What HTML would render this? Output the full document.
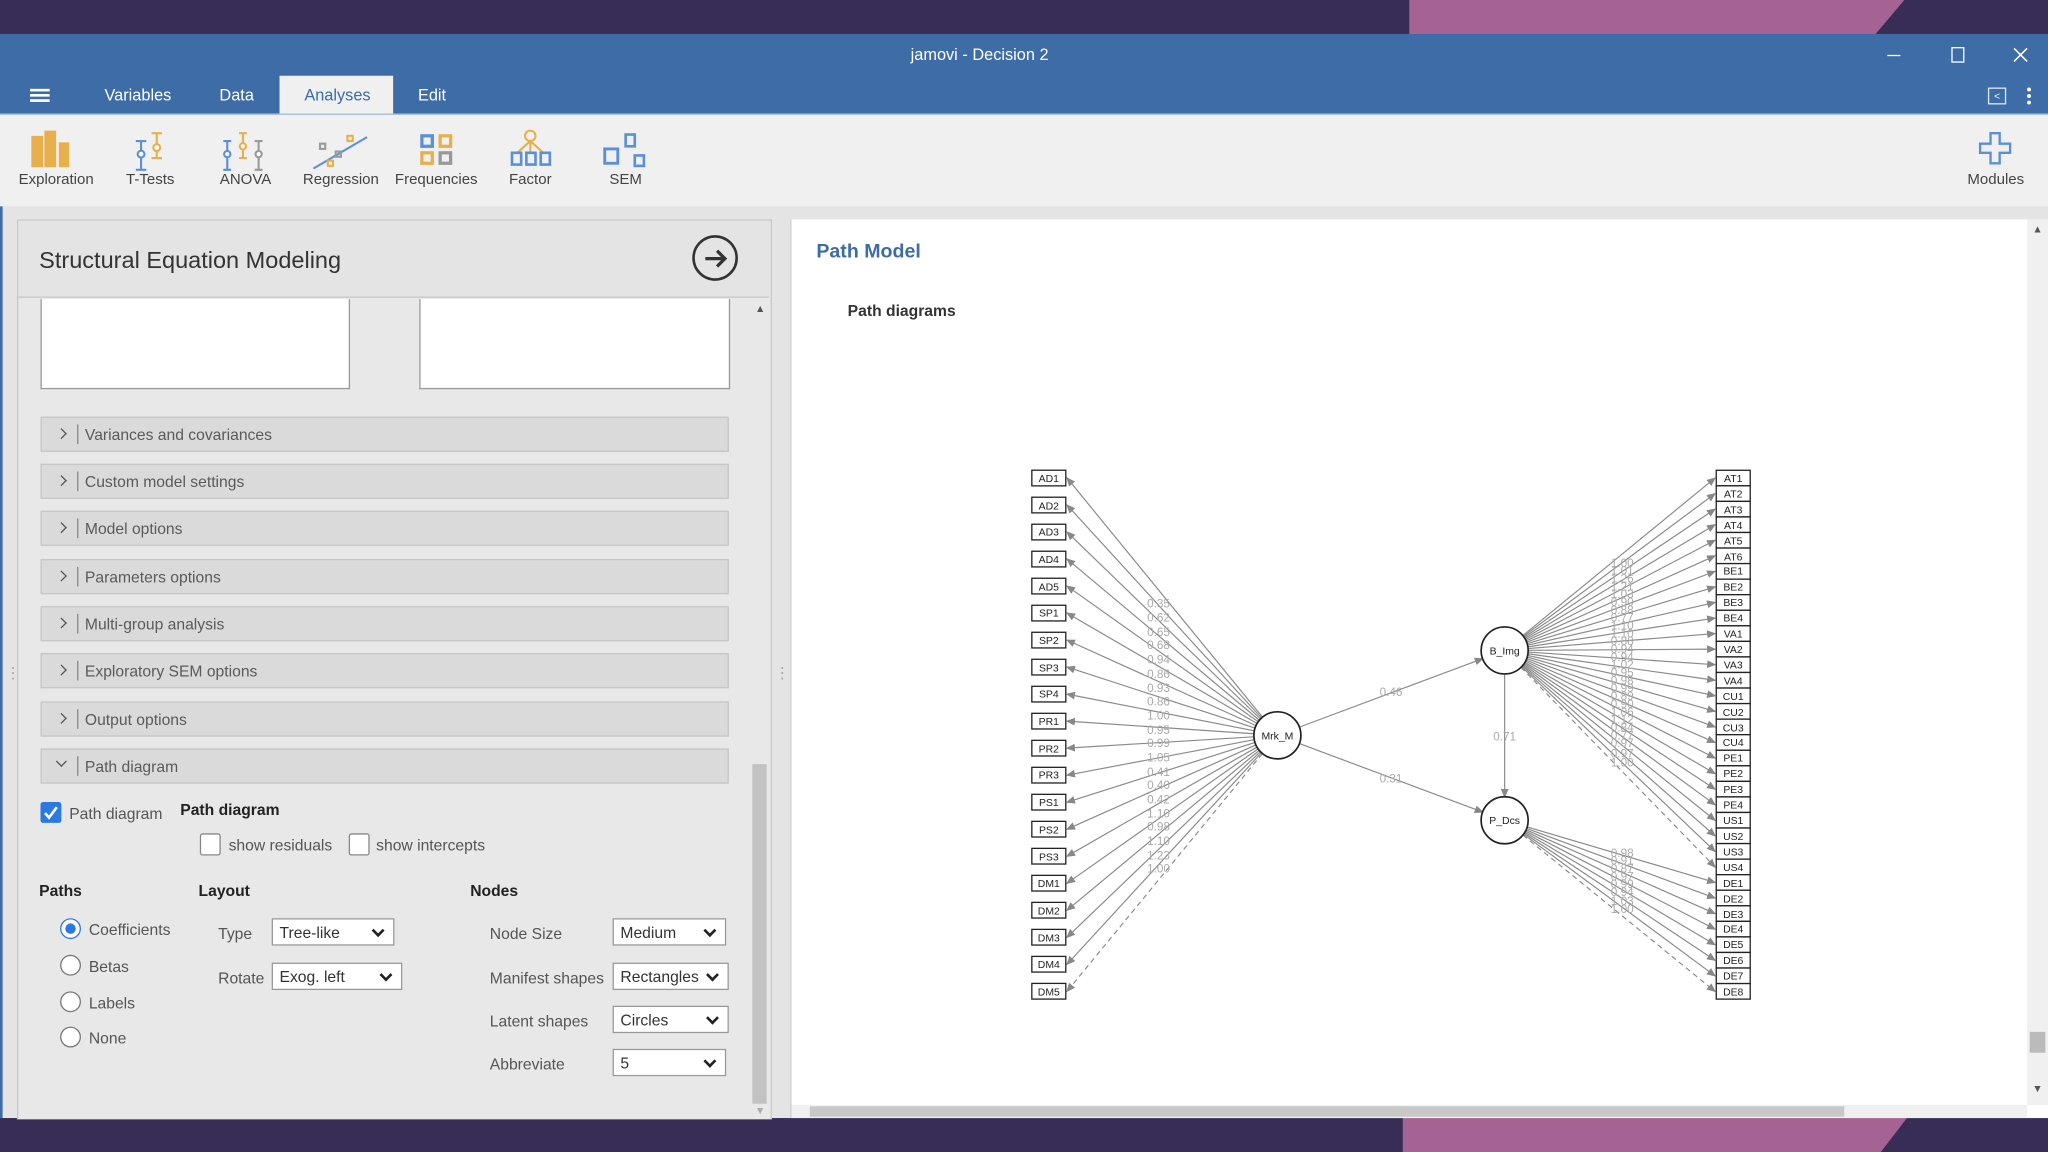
<!DOCTYPE html>
<html><head><meta charset="utf-8">
<style>
html,body{margin:0;padding:0;width:2048px;height:1152px;overflow:hidden;background:#372d57;}
#w{position:absolute;left:0;top:0;width:1568px;height:882px;transform:scale(1.306122);transform-origin:0 0;font-family:"Liberation Sans",sans-serif;}
.a{position:absolute;}
.t{position:absolute;white-space:nowrap;}
.row{position:absolute;left:31px;width:525px;height:25px;background:#dadada;border:1px solid #c6c6c6;}
.row span{position:absolute;left:33px;top:6px;font-size:12px;color:#5a5a5a;}
.row i{position:absolute;left:27px;top:5px;width:1px;height:15px;background:#888;}
.row b{position:absolute;left:12px;top:9px;width:5px;height:5px;border-right:1.6px solid #555;border-bottom:1.6px solid #555;transform:rotate(-45deg);}
.sel{position:absolute;height:21px;background:#fff;border:1px solid #999;font-size:12px;color:#333;box-sizing:border-box;padding:3px 0 0 5px;}
.sel:after{content:"";position:absolute;right:8px;top:5px;width:5px;height:5px;border-right:2px solid #222;border-bottom:2px solid #222;transform:rotate(45deg);}
.lab{font-size:12px;color:#555;}
.rad{position:absolute;width:14px;height:14px;border:1px solid #777;border-radius:50%;background:#fff;}
.ic{position:absolute;top:130px;font-size:11.5px;color:#444;text-align:center;width:70px;}
</style></head><body><div id="w">
<svg class="a" style="left:0;top:0" width="1568" height="882">
<rect x="0" y="0" width="1568" height="26" fill="#372d57"/>
<polygon points="1079,0 1458,0 1436,26 1079,26" fill="#a46393"/>
<rect x="0" y="856" width="1568" height="26" fill="#372d57"/>
<polygon points="1074,856 1460,856 1440,882 1074,882" fill="#a46393"/>
</svg>
<div class="a" style="left:0;top:26px;width:1568px;height:61px;background:#3d6ca7"></div>
<div class="t" style="left:0;width:1500px;text-align:center;top:35px;font-size:12.5px;color:#fff">jamovi - Decision 2</div>
<div class="a" style="left:1445px;top:42px;width:10px;height:1px;background:#fff"></div>
<div class="a" style="left:1494px;top:36px;width:8px;height:10px;border:1px solid #fff"></div>
<svg class="a" style="left:1541px;top:36px" width="12" height="12"><path d="M1 1L11 11M11 1L1 11" stroke="#fff" stroke-width="1.2"/></svg>
<div class="a" style="left:1522px;top:67px;width:12px;height:11px;border:1px solid #dfe8f3;font-size:8px;color:#fff;line-height:11px;text-align:center">&lt;</div>
<div class="a" style="left:1552px;top:67px;width:3px;height:3px;border-radius:50%;background:#fff;box-shadow:0 5px 0 #fff,0 10px 0 #fff"></div>
<div class="a" style="left:23px;top:68px;width:15px;height:2px;background:#fff;box-shadow:0 4px 0 #fff,0 8px 0 #fff"></div>
<div class="t" style="left:80px;top:66px;font-size:12.5px;color:#fff">Variables</div>
<div class="t" style="left:168px;top:66px;font-size:12.5px;color:#fff">Data</div>
<div class="a" style="left:214px;top:58px;width:87px;height:29px;background:#f0f0f0"></div>
<div class="t" style="left:233px;top:66px;font-size:12.5px;color:#3d6ca7">Analyses</div>
<div class="t" style="left:320px;top:66px;font-size:12.5px;color:#fff">Edit</div>
<div class="a" style="left:0;top:87px;width:1568px;height:71px;background:#f0f0f0;border-top:1px solid #a8c0e0"></div>
<div class="a" style="left:0;top:158px;width:1568px;height:698px;background:#e4e4e4"></div>
<svg class="a" style="left:0;top:87px" width="1568" height="60">
<g fill="#e8b04c"><rect x="24" y="17" width="9" height="24"/><rect x="34" y="13" width="9" height="28"/><rect x="45" y="22" width="8" height="19"/></g>
<g stroke-width="1.6" fill="none">
<path d="M108 21v22M104 21h8M104 43h8" stroke="#5b8fd8"/><circle cx="108" cy="31" r="2.6" stroke="#5b8fd8" fill="#fff"/>
<path d="M120 15v19M116 15h8M116 34h8" stroke="#e8b04c"/><circle cx="120" cy="26" r="2.6" stroke="#e8b04c" fill="#fff"/>
<path d="M174 21v22M171 21h6M171 43h6" stroke="#5b8fd8"/><circle cx="174" cy="31" r="2.4" stroke="#5b8fd8" fill="#fff"/>
<path d="M186 15v19M183 15h6M183 34h6" stroke="#e8b04c"/><circle cx="186" cy="25" r="2.4" stroke="#e8b04c" fill="#fff"/>
<path d="M198 21v22M195 21h6M195 43h6" stroke="#999"/><circle cx="198" cy="31" r="2.4" stroke="#999" fill="#fff"/>
<path d="M240 42L281 18" stroke="#5b8fd8"/><rect x="245" y="23" width="4" height="4" stroke="#999"/><rect x="257" y="29" width="4" height="4" stroke="#999"/><rect x="266" y="17" width="4" height="4" stroke="#e8b04c"/><rect x="251" y="36" width="4" height="4" stroke="#e8b04c"/>
<rect x="323" y="17" width="8" height="8" stroke="#5b8fd8" stroke-width="2.5"/><rect x="337" y="17" width="8" height="8" stroke="#e8b04c" stroke-width="2.5"/><rect x="323" y="30" width="8" height="8" stroke="#e8b04c" stroke-width="2.5"/><rect x="337" y="30" width="8" height="8" stroke="#999" stroke-width="2.5"/>
<circle cx="406" cy="17" r="4" stroke="#e8b04c"/><path d="M406 21v9M406 21l-10 9M406 21l10 9" stroke="#e8b04c"/><rect x="392" y="30" width="7" height="9" stroke="#5b8fd8" stroke-width="2"/><rect x="403" y="30" width="7" height="9" stroke="#5b8fd8" stroke-width="2"/><rect x="414" y="30" width="7" height="9" stroke="#5b8fd8" stroke-width="2"/>
<rect x="463" y="27" width="10" height="11" stroke="#5b8fd8" stroke-width="2.2"/><rect x="479" y="16" width="7" height="9" stroke="#5b8fd8" stroke-width="2"/><rect x="486" y="32" width="7" height="8" stroke="#5b8fd8" stroke-width="2"/>
<path d="M1524 15h7v8h8v7h-8v8h-7v-8h-8v-7h8z" stroke="#5b8fd8" stroke-width="1.8"/>
</g></svg>
<div class="ic" style="left:8px;top:132px">Exploration</div>
<div class="ic" style="left:80px;top:132px">T-Tests</div>
<div class="ic" style="left:153px;top:132px">ANOVA</div>
<div class="ic" style="left:226px;top:132px">Regression</div>
<div class="ic" style="left:299px;top:132px">Frequencies</div>
<div class="ic" style="left:371px;top:132px">Factor</div>
<div class="ic" style="left:444px;top:132px">SEM</div>
<div class="ic" style="left:1493px;top:132px">Modules</div>
<div class="a" style="left:0;top:158px;width:2px;height:698px;background:#3d6ca7"></div>
<div class="t" style="left:4px;top:508px;font-size:12px;color:#aaa">⋮</div>
<div class="t" style="left:593px;top:508px;font-size:12px;color:#aaa">⋮</div>
<div class="a" style="left:13px;top:168px;width:576px;height:688px;background:#e8e8e8;border:1px solid #c8c8c8;border-bottom:none"></div>
<div class="a" style="left:14px;top:169px;width:575px;height:58px;background:#e4e4e4;border-bottom:1px solid #c8c8c8"></div>
<div class="t" style="left:30px;top:189px;font-size:18px;color:#333">Structural Equation Modeling</div>
<div class="a" style="left:530px;top:180px;width:35px;height:35px;border:2.5px solid #333;border-radius:50%;box-sizing:border-box"></div>
<svg class="a" style="left:530px;top:180px" width="36" height="36"><path d="M10 18h15M19 12l6 6-6 6" stroke="#333" stroke-width="2.5" fill="none"/></svg>
<div class="a" style="left:31px;top:229px;width:235px;height:68px;background:#fff;border:1px solid #999;border-top:none"></div>
<div class="a" style="left:321px;top:229px;width:236px;height:68px;background:#fff;border:1px solid #999;border-top:none"></div>
<div class="row" style="top:319px"><b></b><i></i><span>Variances and covariances</span></div>
<div class="row" style="top:355px"><b></b><i></i><span>Custom model settings</span></div>
<div class="row" style="top:391px"><b></b><i></i><span>Model options</span></div>
<div class="row" style="top:428px"><b></b><i></i><span>Parameters options</span></div>
<div class="row" style="top:464px"><b></b><i></i><span>Multi-group analysis</span></div>
<div class="row" style="top:500px"><b></b><i></i><span>Exploratory SEM options</span></div>
<div class="row" style="top:537px"><b></b><i></i><span>Output options</span></div>
<div class="row" style="top:573px"><b style="transform:rotate(45deg);top:6px"></b><i></i><span>Path diagram</span></div>
<div class="a" style="left:575px;top:229px;width:13px;height:627px;background:#e8e8e8"></div>
<div class="a" style="left:576px;top:585px;width:11px;height:260px;background:#c2c2c2"></div>
<div class="t" style="left:578px;top:232px;font-size:8px;color:#555">▲</div>
<div class="t" style="left:578px;top:846px;font-size:8px;color:#aaa">▼</div>
<div class="a" style="left:31px;top:614px;width:16px;height:16px;background:#2a7ae2;border-radius:2px"></div>
<svg class="a" style="left:31px;top:614px" width="16" height="16"><path d="M3.5 8.5l3 3.5 6-8" stroke="#fff" stroke-width="2" fill="none"/></svg>
<div class="t lab" style="left:53px;top:616px">Path diagram</div>
<div class="t" style="left:138px;top:613px;font-size:12px;font-weight:bold;color:#222">Path diagram</div>
<div class="a" style="left:153px;top:638px;width:14px;height:15px;background:#fff;border:1px solid #888;border-radius:2px"></div>
<div class="t lab" style="left:175px;top:640px">show residuals</div>
<div class="a" style="left:267px;top:638px;width:14px;height:15px;background:#fff;border:1px solid #888;border-radius:2px"></div>
<div class="t lab" style="left:288px;top:640px">show intercepts</div>
<div class="t" style="left:30px;top:675px;font-size:12px;font-weight:bold;color:#222">Paths</div>
<div class="t" style="left:152px;top:675px;font-size:12px;font-weight:bold;color:#222">Layout</div>
<div class="t" style="left:360px;top:675px;font-size:12px;font-weight:bold;color:#222">Nodes</div>
<div class="rad" style="left:46px;top:703px;border-color:#2a7ae2"></div><div class="a" style="left:50px;top:707px;width:8px;height:8px;border-radius:50%;background:#2a7ae2"></div>
<div class="rad" style="left:46px;top:731px"></div><div class="rad" style="left:46px;top:759px"></div><div class="rad" style="left:46px;top:786px"></div>
<div class="t lab" style="left:68px;top:705px">Coefficients</div>
<div class="t lab" style="left:68px;top:733px">Betas</div>
<div class="t lab" style="left:68px;top:761px">Labels</div>
<div class="t lab" style="left:68px;top:788px">None</div>
<div class="t lab" style="left:167px;top:708px">Type</div>
<div class="sel" style="left:208px;top:703px;width:94px">Tree-like</div>
<div class="t lab" style="left:167px;top:742px">Rotate</div>
<div class="sel" style="left:208px;top:737px;width:100px">Exog. left</div>
<div class="t lab" style="left:375px;top:708px">Node Size</div>
<div class="sel" style="left:469px;top:703px;width:87px">Medium</div>
<div class="t lab" style="left:375px;top:742px">Manifest shapes</div>
<div class="sel" style="left:469px;top:737px;width:89px">Rectangles</div>
<div class="t lab" style="left:375px;top:775px">Latent shapes</div>
<div class="sel" style="left:469px;top:770px;width:89px">Circles</div>
<div class="t lab" style="left:375px;top:808px">Abbreviate</div>
<div class="sel" style="left:469px;top:803px;width:87px">5</div>
<div class="a" style="left:605px;top:168px;width:963px;height:688px;background:#fff;border-left:1px solid #ccc"></div>
<div class="t" style="left:625px;top:184px;font-size:15px;font-weight:bold;color:#3d6ca7">Path Model</div>
<div class="t" style="left:649px;top:231px;font-size:12px;font-weight:bold;color:#333">Path diagrams</div>
<div class="a" style="left:1552px;top:168px;width:16px;height:678px;background:#f0f0f0"></div>
<div class="a" style="left:1554px;top:790px;width:12px;height:16px;background:#bbb"></div>
<div class="t" style="left:1556px;top:171px;font-size:8px;color:#555">▲</div>
<div class="t" style="left:1556px;top:829px;font-size:8px;color:#555">▼</div>
<div class="a" style="left:606px;top:846px;width:946px;height:10px;background:#f0f0f0"></div>
<div class="a" style="left:620px;top:847px;width:792px;height:8px;background:#c8c8c8"></div>
<svg id="d" class="a" style="left:0;top:0" width="1568" height="882" font-family="Liberation Sans, sans-serif">
<defs><marker id="ar" markerWidth="7" markerHeight="6" refX="6" refY="3" orient="auto" markerUnits="userSpaceOnUse"><path d="M0 0L7 3L0 6z" fill="#888"/></marker></defs>
<g id="ln" stroke="#8a8a8a" stroke-width="0.9" fill="none"></g>
<g fill="#fff" stroke="#222" stroke-width="1.3"><circle cx="978" cy="563" r="18"/><circle cx="1152" cy="498" r="18"/><circle cx="1152" cy="628" r="18"/></g>
<g id="bx" fill="#fff" stroke="#222" stroke-width="1"></g>
<g font-size="8" fill="#222" text-anchor="middle">
<text x="978" y="566">Mrk_M</text><text x="1152" y="501">B_Img</text><text x="1152" y="631">P_Dcs</text>
<text x="803" y="369">AD1</text><text x="803" y="390">AD2</text><text x="803" y="410">AD3</text><text x="803" y="431">AD4</text><text x="803" y="452">AD5</text><text x="803" y="472">SP1</text><text x="803" y="493">SP2</text><text x="803" y="514">SP3</text><text x="803" y="534">SP4</text><text x="803" y="555">PR1</text><text x="803" y="576">PR2</text><text x="803" y="596">PR3</text><text x="803" y="617">PS1</text><text x="803" y="638">PS2</text><text x="803" y="659">PS3</text><text x="803" y="679">DM1</text><text x="803" y="700">DM2</text><text x="803" y="721">DM3</text><text x="803" y="741">DM4</text><text x="803" y="762">DM5</text>
<text x="1327" y="369">AT1</text><text x="1327" y="381">AT2</text><text x="1327" y="393">AT3</text><text x="1327" y="405">AT4</text><text x="1327" y="417">AT5</text><text x="1327" y="429">AT6</text><text x="1327" y="440">BE1</text><text x="1327" y="452">BE2</text><text x="1327" y="464">BE3</text><text x="1327" y="476">BE4</text><text x="1327" y="488">VA1</text><text x="1327" y="500">VA2</text><text x="1327" y="512">VA3</text><text x="1327" y="524">VA4</text><text x="1327" y="536">CU1</text><text x="1327" y="548">CU2</text><text x="1327" y="560">CU3</text><text x="1327" y="571">CU4</text><text x="1327" y="583">PE1</text><text x="1327" y="595">PE2</text><text x="1327" y="607">PE3</text><text x="1327" y="619">PE4</text><text x="1327" y="631">US1</text><text x="1327" y="643">US2</text><text x="1327" y="655">US3</text><text x="1327" y="667">US4</text><text x="1327" y="679">DE1</text><text x="1327" y="691">DE2</text><text x="1327" y="703">DE3</text><text x="1327" y="714">DE4</text><text x="1327" y="726">DE5</text><text x="1327" y="738">DE6</text><text x="1327" y="750">DE7</text><text x="1327" y="762">DE8</text>
</g>
<g font-size="9" fill="#aaa" text-anchor="middle">
<text x="887" y="465">0.35</text><text x="887" y="476">0.62</text><text x="887" y="487">0.65</text><text x="887" y="497">0.68</text><text x="887" y="508">0.94</text><text x="887" y="519">0.86</text><text x="887" y="530">0.93</text><text x="887" y="540">0.86</text><text x="887" y="551">1.00</text><text x="887" y="562">0.95</text><text x="887" y="572">0.99</text><text x="887" y="583">1.05</text><text x="887" y="594">0.41</text><text x="887" y="604">0.40</text><text x="887" y="615">0.42</text><text x="887" y="626">1.10</text><text x="887" y="636">0.98</text><text x="887" y="647">1.10</text><text x="887" y="658">1.23</text><text x="887" y="668">1.00</text>
<text x="1065" y="533">0.46</text><text x="1065" y="599">0.31</text><text x="1152" y="567">0.71</text>
<text x="1242" y="434">1.00</text><text x="1242" y="440">1.01</text><text x="1242" y="446">1.26</text><text x="1242" y="452">1.21</text><text x="1242" y="458">1.03</text><text x="1242" y="464">0.90</text><text x="1242" y="470">0.88</text><text x="1242" y="476">0.77</text><text x="1242" y="482">1.10</text><text x="1242" y="488">1.10</text><text x="1242" y="494">0.88</text><text x="1242" y="500">0.94</text><text x="1242" y="506">0.94</text><text x="1242" y="512">1.02</text><text x="1242" y="518">0.95</text><text x="1242" y="524">0.98</text><text x="1242" y="530">0.99</text><text x="1242" y="536">0.89</text><text x="1242" y="542">0.90</text><text x="1242" y="548">1.06</text><text x="1242" y="554">1.12</text><text x="1242" y="560">0.84</text><text x="1242" y="566">0.77</text><text x="1242" y="572">0.97</text><text x="1242" y="580">0.97</text><text x="1242" y="587">1.00</text>
<text x="1242" y="656">0.98</text><text x="1242" y="662">0.91</text><text x="1242" y="668">0.87</text><text x="1242" y="674">0.97</text><text x="1242" y="680">0.99</text><text x="1242" y="686">0.94</text><text x="1242" y="693">1.03</text><text x="1242" y="699">1.00</text>
</g>
</svg>
<script>
(function(){var ns="http://www.w3.org/2000/svg",ln=document.getElementById("ln"),bx=document.getElementById("bx");
function L(x1,y1,x2,y2,d){var l=document.createElementNS(ns,"line");l.setAttribute("x1",x1);l.setAttribute("y1",y1);l.setAttribute("x2",x2);l.setAttribute("y2",y2);l.setAttribute("marker-end","url(#ar)");if(d)l.setAttribute("stroke-dasharray","4,3");ln.appendChild(l);}
function R(x,y,w,h){var r=document.createElementNS(ns,"rect");r.setAttribute("x",x);r.setAttribute("y",y);r.setAttribute("width",w);r.setAttribute("height",h);bx.appendChild(r);}
function edge(cx,cy,tx,ty){var dx=tx-cx,dy=ty-cy,d=Math.sqrt(dx*dx+dy*dy);return [cx+dx/d*18,cy+dy/d*18];}
for(var i=0;i<20;i++){var y=366+i*20.68;R(790,y-6,26,12);var s=edge(978,563,817,y);L(s[0],s[1],817,y,i==19);}
for(var j=0;j<34;j++){var y=366+j*11.909;R(1314,y-5.95,26,11.9);var c=j<26?498:628;var s=edge(1152,c,1313,y);L(s[0],s[1],1313,y,j==25||j==33);}
var s=edge(978,563,1152,498);var e=edge(1152,498,978,563);L(s[0],s[1],e[0],e[1]);
s=edge(978,563,1152,628);e=edge(1152,628,978,563);L(s[0],s[1],e[0],e[1]);
L(1152,516,1152,610);})();
</script>
</div></body></html>
